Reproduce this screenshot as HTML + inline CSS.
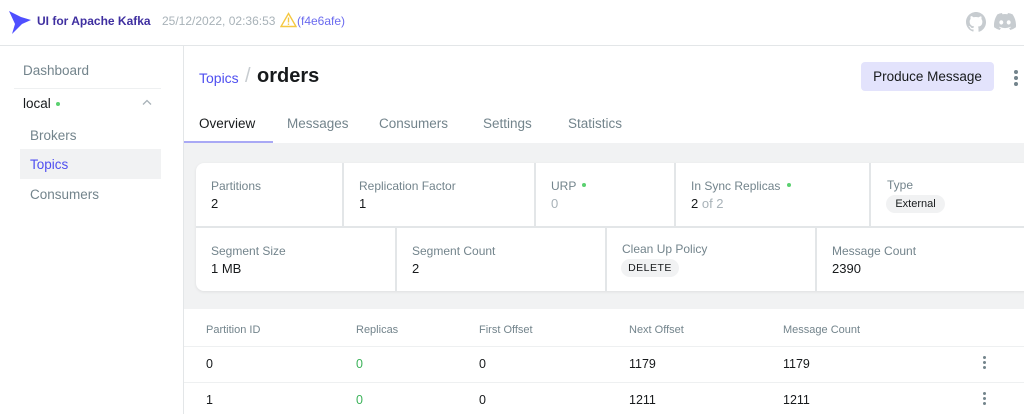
<!DOCTYPE html><html><head><style>
*{box-sizing:border-box;margin:0;padding:0}
body{width:1024px;height:414px;overflow:hidden;font-family:"Liberation Sans",sans-serif;background:#fff;position:relative;color:#171a1c}
.a{position:absolute;white-space:nowrap}
.lbl{font-size:12px;color:#73848c}
.val{font-size:13px;color:#171a1c}
.th{font-size:11px;color:#73848c}
.td{font-size:12.5px;color:#171a1c}
.dot3{position:absolute;width:4px}
.dot3 i{display:block;width:4px;height:4px;border-radius:2px;background:#73848c;margin-bottom:2px}
</style></head><body>
<svg class="a" style="left:8px;top:9px" width="24" height="26" viewBox="0 0 24 26"><path d="M1 2 L13 8 L23 11 L14 15 L4 25 L7 15 Z" fill="#4f4fff"/></svg>
<div class="a" style="left:37px;top:14px;font-size:12px;font-weight:bold;color:#3f2fa0">UI for Apache Kafka</div>
<div class="a" style="left:162px;top:14px;font-size:12px;color:#a8b2b8">25/12/2022, 02:36:53</div>
<svg class="a" style="left:280px;top:12px" width="17" height="16" viewBox="0 0 17 16"><path d="M8.5 1.5 L16 14.5 H1 Z" fill="none" stroke="#f5c842" stroke-width="1.4"/><rect x="7.8" y="5.5" width="1.4" height="5" fill="#f5c842"/><rect x="7.8" y="11.5" width="1.4" height="1.4" fill="#f5c842"/></svg>
<div class="a" style="left:297px;top:14px;font-size:12px;color:#6b6bef">(f4e6afe)</div>
<svg class="a" style="left:966px;top:12px" width="20" height="20" viewBox="0 0 16 16"><path fill="#c7ccd0" d="M8 0C3.58 0 0 3.58 0 8c0 3.54 2.290 6.53 5.47 7.59.4.07.55-.17.55-.38v-1.33c-2.23.48-2.7-1.07-2.7-1.070-.36-.92-.89-1.17-.89-1.17-.73-.5.06-.49.06-.49.8.06 1.23.82 1.23.82.72 1.23 1.88.87 2.34.67.07-.52.28-.87.5-1.07-1.78-.2-3.64-.89-3.640-3.95 0-.87.31-1.59.82-2.15-.08-.2-.36-1.02.08-2.12 0 0 .67-.21 2.2.82A7.6 7.6 0 0 1 8 4.04c.68 0 1.36.09 2 .27 1.53-1.04 2.2-.82 2.2-.82.44 1.1.16 1.92.08 2.12.51.56.82 1.27.82 2.15 0 3.07-1.87 3.75-3.65 3.95.29.25.54.73.54 1.48v2.2c0 .21.15.46.55.38A8 8 0 0 0 16 8c0-4.42-3.58-8-8-8z"/></svg>
<svg class="a" style="left:994px;top:13px" width="22" height="17" viewBox="0 0 22 17"><path fill="#c7ccd0" d="M18.6 1.4A18 18 0 0 0 14 0l-.6 1.2a17 17 0 0 0-5 0L8 0a18 18 0 0 0-4.6 1.4C.5 5.8-.3 10 .1 14.2A18 18 0 0 0 5.7 17l1.2-1.9-1.9-.9.5-.4a13 13 0 0 0 11 0l.5.4-1.9.9 1.2 1.9a18 18 0 0 0 5.6-2.8c.5-4.8-.8-9-3.3-12.8zM7.3 11.6c-1.1 0-2-1-2-2.2s.9-2.2 2-2.2 2 1 2 2.2-.9 2.2-2 2.2zm7.4 0c-1.1 0-2-1-2-2.2s.9-2.2 2-2.2 2 1 2 2.2-.9 2.2-2 2.2z"/></svg>
<div class="a" style="left:0;top:45px;width:1024px;height:1px;background:#e3e6e8"></div>
<div class="a" style="left:183px;top:46px;width:1px;height:368px;background:#e3e6e8"></div>
<div class="a" style="left:23px;top:63px;font-size:13.5px;color:#73848c">Dashboard</div>
<div class="a" style="left:14px;top:88px;width:147px;height:1px;background:#eef0f1"></div>
<div class="a" style="left:23px;top:96px;font-size:13.5px;color:#171a1c">local</div>
<div class="a" style="left:56px;top:102px;width:4px;height:4px;border-radius:2px;background:#5ad06f"></div>
<svg class="a" style="left:142px;top:99px" width="10" height="7" viewBox="0 0 10 7"><path d="M1 5.5 L5 1.5 L9 5.5" fill="none" stroke="#a8b2b8" stroke-width="1.3"/></svg>
<div class="a" style="left:30px;top:128px;font-size:13.5px;color:#73848c">Brokers</div>
<div class="a" style="left:20px;top:149px;width:141px;height:30px;background:#f1f2f3"></div>
<div class="a" style="left:30px;top:157px;font-size:13.5px;color:#4f4ff0">Topics</div>
<div class="a" style="left:30px;top:187px;font-size:13.5px;color:#73848c">Consumers</div>
<div class="a" style="left:199px;top:70px;font-size:14px;color:#4f4ff0">Topics</div>
<div class="a" style="left:245px;top:65px;font-size:20px;color:#c7ccd0">/</div>
<div class="a" style="left:257px;top:65px;font-size:20px;font-weight:bold;color:#171a1c">orders</div>
<div class="a" style="left:861px;top:62px;width:133px;height:29px;border-radius:4px;background:#e3e3fc;font-size:13.5px;color:#171a1c;text-align:center;line-height:29px">Produce Message</div>
<div class="dot3" style="left:1014px;top:70px"><i></i><i></i><i></i></div>
<div class="a" style="left:199px;top:116px;font-size:13.5px;color:#171a1c">Overview</div>
<div class="a" style="left:287px;top:116px;font-size:13.5px;color:#73848c">Messages</div>
<div class="a" style="left:379px;top:116px;font-size:13.5px;color:#73848c">Consumers</div>
<div class="a" style="left:483px;top:116px;font-size:13.5px;color:#73848c">Settings</div>
<div class="a" style="left:568px;top:116px;font-size:13.5px;color:#73848c">Statistics</div>
<div class="a" style="left:184px;top:141px;width:89px;height:2px;background:#a9a9f5"></div>
<div class="a" style="left:184px;top:143px;width:840px;height:166px;background:#f1f2f3"></div>
<div class="a" style="left:196px;top:163px;width:840px;height:128px;background:#e3e6e8;border-radius:8px;overflow:hidden;box-shadow:0 1px 3px rgba(0,0,0,.08)">
 <div class="a" style="left:0;top:0;width:146px;height:63px;background:#fff"></div>
 <div class="a" style="left:148px;top:0;width:190px;height:63px;background:#fff"></div>
 <div class="a" style="left:340px;top:0;width:138px;height:63px;background:#fff"></div>
 <div class="a" style="left:480px;top:0;width:193px;height:63px;background:#fff"></div>
 <div class="a" style="left:675px;top:0;width:200px;height:63px;background:#fff"></div>
 <div class="a" style="left:0;top:65px;width:199px;height:63px;background:#fff"></div>
 <div class="a" style="left:201px;top:65px;width:208px;height:63px;background:#fff"></div>
 <div class="a" style="left:411px;top:65px;width:208px;height:63px;background:#fff"></div>
 <div class="a" style="left:621px;top:65px;width:220px;height:63px;background:#fff"></div>
</div>
<div class="a lbl" style="left:211px;top:179px">Partitions</div><div class="a val" style="left:211px;top:196px">2</div>
<div class="a lbl" style="left:359px;top:179px">Replication Factor</div><div class="a val" style="left:359px;top:196px">1</div>
<div class="a lbl" style="left:551px;top:179px">URP</div><div class="a" style="left:582px;top:183px;width:4px;height:4px;border-radius:2px;background:#5ad06f"></div><div class="a val" style="left:551px;top:196px;color:#a8b2b8">0</div>
<div class="a lbl" style="left:691px;top:179px">In Sync Replicas</div><div class="a" style="left:787px;top:183px;width:4px;height:4px;border-radius:2px;background:#5ad06f"></div><div class="a val" style="left:691px;top:196px">2 <span style="color:#a8b2b8">of 2</span></div>
<div class="a lbl" style="left:887px;top:178px">Type</div>
<div class="a" style="left:886px;top:195px;width:59px;height:18px;border-radius:9px;background:#f1f2f3;font-size:11px;color:#171a1c;text-align:center;line-height:18px">External</div>
<div class="a lbl" style="left:211px;top:244px">Segment Size</div><div class="a val" style="left:211px;top:261px">1 MB</div>
<div class="a lbl" style="left:412px;top:244px">Segment Count</div><div class="a val" style="left:412px;top:261px">2</div>
<div class="a lbl" style="left:622px;top:242px">Clean Up Policy</div>
<div class="a" style="left:621px;top:259px;width:58px;height:18px;border-radius:9px;background:#f1f2f3;font-size:10.5px;color:#171a1c;text-align:center;line-height:18px;letter-spacing:.5px">DELETE</div>
<div class="a lbl" style="left:832px;top:244px">Message Count</div><div class="a val" style="left:832px;top:261px">2390</div>
<div class="a th" style="left:206px;top:324px">Partition ID</div>
<div class="a th" style="left:356px;top:324px">Replicas</div>
<div class="a th" style="left:479px;top:324px">First Offset</div>
<div class="a th" style="left:629px;top:324px">Next Offset</div>
<div class="a th" style="left:783px;top:324px">Message Count</div>
<div class="a" style="left:184px;top:346px;width:840px;height:1px;background:#eef0f1"></div>
<div class="a td" style="left:206px;top:357px">0</div><div class="a td" style="left:356px;top:357px;color:#3cb35a">0</div><div class="a td" style="left:479px;top:357px">0</div><div class="a td" style="left:629px;top:357px">1179</div><div class="a td" style="left:783px;top:357px">1179</div>
<div class="dot3" style="left:983px;top:356px"><i style="width:3px;height:3px"></i><i style="width:3px;height:3px"></i><i style="width:3px;height:3px"></i></div>
<div class="a" style="left:184px;top:382px;width:840px;height:1px;background:#eef0f1"></div>
<div class="a td" style="left:206px;top:393px">1</div><div class="a td" style="left:356px;top:393px;color:#3cb35a">0</div><div class="a td" style="left:479px;top:393px">0</div><div class="a td" style="left:629px;top:393px">1211</div><div class="a td" style="left:783px;top:393px">1211</div>
<div class="dot3" style="left:983px;top:392px"><i style="width:3px;height:3px"></i><i style="width:3px;height:3px"></i><i style="width:3px;height:3px"></i></div>
</body></html>
